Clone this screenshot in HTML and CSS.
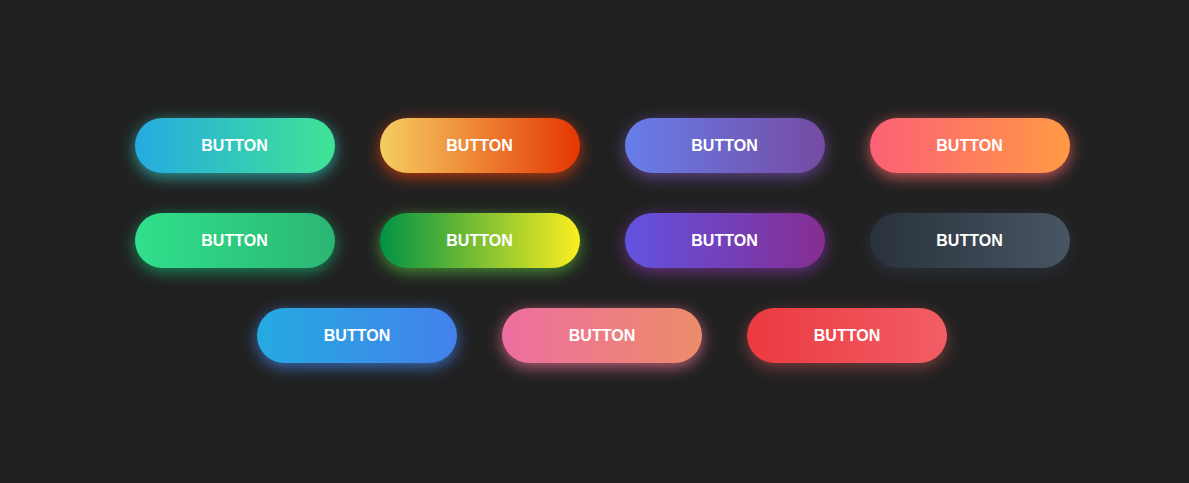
FILE: index.html
```html
<!DOCTYPE html>
<html lang="en">

<head>
    <meta charset="UTF-8">
    <meta name="viewport" content="width=device-width, initial-scale=1.0">
    <title>Gradient buttons</title>
    <link rel="stylesheet" href="styles.css">
</head>

<body>
    <div class="buttons">
        <button class="btn color-1">BUTTON</button>
        <button class="btn color-2">BUTTON</button>
        <button class="btn color-3">BUTTON</button>
        <button class="btn color-4">BUTTON</button>
        <button class="btn color-5">BUTTON</button>
        <button class="btn color-6">BUTTON</button>
        <button class="btn color-7">BUTTON</button>
        <button class="btn color-8">BUTTON</button>
        <button class="btn color-9">BUTTON</button>
        <button class="btn color-10">BUTTON</button>
        <button class="btn color-11">BUTTON</button>
    </div>
</body>

</html>
```

FILE: styles.css
```css
* {
    box-sizing: border-box;
}

html,
body {
    height: 100%;
}

body {
    margin: 0;
    background-color: #212121;
    font-family: "Liberation Sans", Arial, sans-serif;
}

.buttons {
    width: 935px;
    margin: 0 auto;
    padding: 118px 0 60px;
    position: relative;
    left: 7.5px;
    display: flex;
    flex-wrap: wrap;
    justify-content: center;
    column-gap: 45px;
    row-gap: 40px;
}

.btn {
    width: 200px;
    height: 55px;
    border: none;
    border-radius: 50px;
    font-family: inherit;
    font-size: 16px;
    font-weight: bold;
    color: #fff;
    cursor: pointer;
}

.color-1 {
    background-image: linear-gradient(to right, #25aae1, #40e495);
    box-shadow: 0 4px 15px 0 rgba(49, 196, 190, 0.75);
}

.color-2 {
    background-image: linear-gradient(to right, #f5ce62, #e43603);
    box-shadow: 0 4px 15px 0 rgba(229, 66, 10, 0.75);
}

.color-3 {
    background-image: linear-gradient(to right, #667eea, #764ba2);
    box-shadow: 0 4px 15px 0 rgba(116, 79, 168, 0.75);
}

.color-4 {
    background-image: linear-gradient(to right, #fc6076, #ff9a44);
    box-shadow: 0 4px 15px 0 rgba(252, 104, 110, 0.75);
}

.color-5 {
    background-image: linear-gradient(to right, #31e08b, #2bb673);
    box-shadow: 0 4px 15px 0 rgba(23, 168, 108, 0.75);
}

.color-6 {
    background-image: linear-gradient(to right, #009245, #fcee21);
    box-shadow: 0 4px 15px 0 rgba(83, 176, 57, 0.75);
}

.color-7 {
    background-image: linear-gradient(to right, #6253e1, #852d91);
    box-shadow: 0 4px 15px 0 rgba(126, 52, 161, 0.75);
}

.color-8 {
    background-image: linear-gradient(to right, #29323c, #485563);
    box-shadow: 0 4px 15px 0 rgba(45, 54, 65, 0.75);
}

.color-9 {
    background-image: linear-gradient(to right, #25aae1, #4481eb);
    box-shadow: 0 4px 15px 0 rgba(65, 132, 234, 0.75);
}

.color-10 {
    background-image: linear-gradient(to right, #ed6ea0, #ec8c69);
    box-shadow: 0 4px 15px 0 rgba(236, 116, 149, 0.75);
}

.color-11 {
    background-image: linear-gradient(to right, #eb3941, #f15e64);
    box-shadow: 0 5px 15px rgba(242, 97, 103, 0.4);
}
```
